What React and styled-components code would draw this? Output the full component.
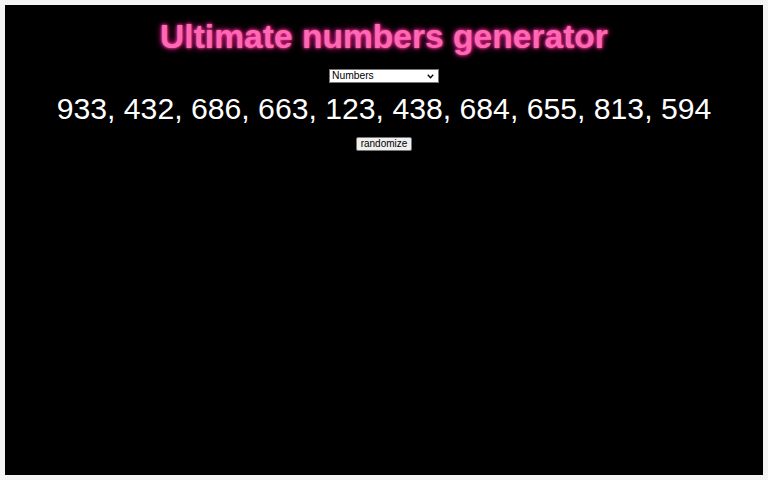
import React, { useState } from "react";
import styled, { createGlobalStyle } from "styled-components";

const Global = createGlobalStyle`
  body {
    margin: 5px;
    background: #f4f4f4;
    font-family: "Liberation Sans", Arial, sans-serif;
  }
`;

const Screen = styled.div`
  background: #000;
  height: 470px;
  display: flex;
  flex-direction: column;
  align-items: center;
  padding-top: 13px;
  box-sizing: border-box;
`;

const Title = styled.h1`
  margin: 0;
  font-size: 33.6px;
  font-weight: bold;
  color: #ff69b4;
  text-shadow: 0 0 6px #ff1493, 0 0 3px #ff69b4;
`;

const PickerWrap = styled.div`
  position: relative;
  margin-top: 13px;
  width: 110px;
  height: 14px;
`;

const Picker = styled.select`
  display: block;
  appearance: none;
  width: 100%;
  height: 100%;
  margin: 0;
  font-size: 10.3px;
  line-height: 12px;
  font-family: "Liberation Sans", Arial, sans-serif;
  padding: 0 0 0 2px;
  border: 1px solid #767676;
  border-radius: 0;
  background: #fff;
  color: #000;
  box-sizing: border-box;
`;

const Chevron = styled.svg`
  position: absolute;
  right: 5px;
  top: 5px;
  width: 7px;
  height: 5px;
  pointer-events: none;
`;

const Output = styled.div`
  margin-top: 9px;
  color: #fff;
  font-size: 30.2px;
`;

const Button = styled.button`
  margin-top: 11px;
  height: 14px;
  font-size: 10px;
  line-height: 12px;
  font-family: "Liberation Sans", Arial, sans-serif;
  padding: 0 4px;
  background: #efefef;
  border: 1px solid #767676;
  border-radius: 2px;
  color: #000;
`;

const start = [933, 432, 686, 663, 123, 438, 684, 655, 813, 594];

export default function App() {
  const [nums, setNums] = useState(start);
  const randomize = () =>
    setNums(nums.map(() => Math.floor(Math.random() * 900) + 100));
  return (
    <>
      <Global />
      <Screen>
        <Title>Ultimate numbers generator</Title>
        <PickerWrap>
          <Picker defaultValue="numbers">
            <option value="numbers">Numbers</option>
            <option value="letters">Letters</option>
          </Picker>
          <Chevron viewBox="0 0 7 5">
            <path d="M0.8 0.8 L3.5 3.8 L6.2 0.8" fill="none" stroke="#000" strokeWidth="1.3" />
          </Chevron>
        </PickerWrap>
        <Output>{nums.join(", ")}</Output>
        <Button onClick={randomize}>randomize</Button>
      </Screen>
    </>
  );
}
